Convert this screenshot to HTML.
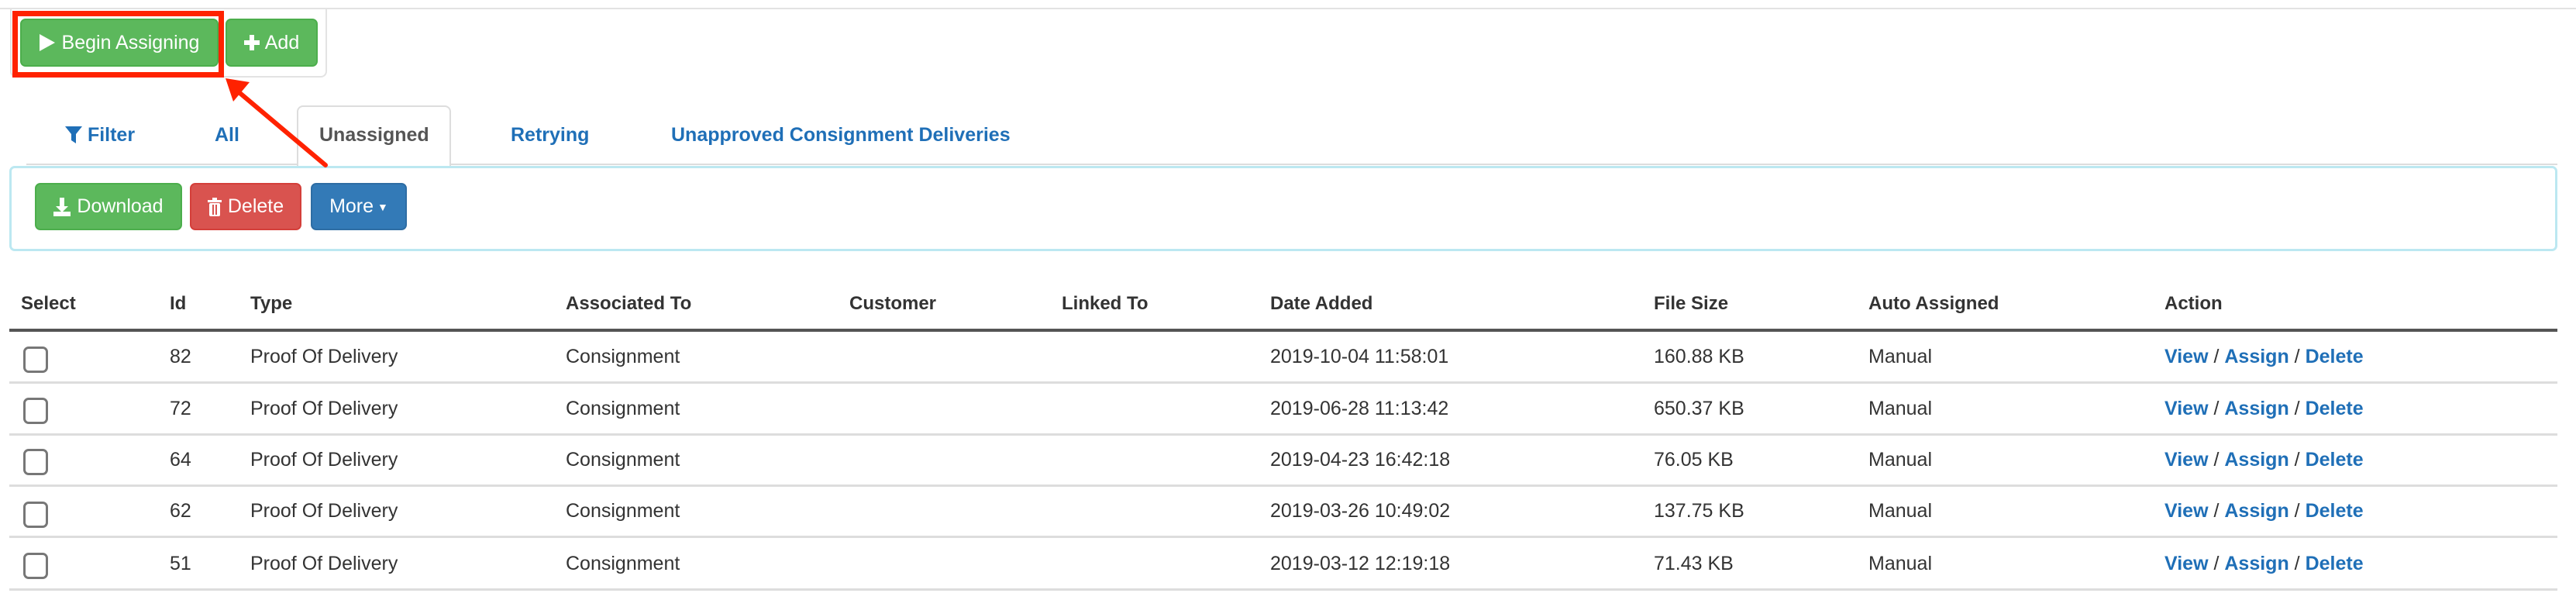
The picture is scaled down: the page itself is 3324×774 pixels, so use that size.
<!DOCTYPE html>
<html><head><meta charset="utf-8"><style>
*{box-sizing:border-box;margin:0;padding:0}
body{width:3324px;height:774px;background:#fff;font-family:"Liberation Sans",Arial,sans-serif;color:#333;position:relative;overflow:hidden}
.a{position:absolute;white-space:nowrap}
.btn{position:absolute;border-radius:7px;color:#fff;font-size:25px;display:flex;align-items:center;justify-content:center}
.g{background:#5cb85c;border:2px solid #4cae4c}
.r{background:#d9534f;border:2px solid #d43f3a}
.b{background:#337ab7;border:2px solid #2e6da4}
.tab{position:absolute;top:160px;font-size:25px;font-weight:bold;color:#1f6fb7}
.th{position:absolute;top:378px;font-size:24px;font-weight:bold;color:#333}
.td{position:absolute;font-size:25px;color:#333}
.lk{color:#1f6fb7;font-weight:bold}
.cb{position:absolute;left:30px;width:32px;height:34px;border:3px solid #777;border-radius:7px;background:#fff}
.hl{position:absolute;left:12px;width:3288px;height:3px;background:#ddd}
</style></head><body>
<div class="a" style="left:0;top:10px;width:3324px;height:2px;background:#e3e3e3"></div>
<div class="a" style="left:13px;top:10px;width:409px;height:90px;border:2px solid #e3e3e3;border-top:none;border-radius:0 0 8px 8px"></div>
<div class="btn g" style="left:26px;top:24px;width:256px;height:62px"><svg width="20" height="22" style="margin-right:9px"><polygon points="0,0 20,11 0,22" fill="#fff"/></svg>Begin Assigning</div>
<div class="btn g" style="left:291px;top:24px;width:119px;height:62px"><svg width="20" height="20" style="margin-right:7px"><rect x="7" y="0" width="6" height="20" fill="#fff"/><rect x="0" y="7" width="20" height="6" fill="#fff"/></svg>Add</div>
<div class="a" style="left:16px;top:14px;width:273px;height:86px;border:7px solid #ff2200"></div>

<div class="a" style="left:34px;top:211px;width:3266px;height:2px;background:#ddd"></div>
<div class="a" style="left:383px;top:136px;width:199px;height:78px;border:2px solid #ddd;border-bottom:none;border-radius:8px 8px 0 0;background:#fff"></div>
<div class="tab" style="left:84px"><svg width="22" height="22" style="vertical-align:-3px"><polygon points="0,0 22,0 14,10 14,22 8,18 8,10" fill="#1f6fb7"/></svg> Filter</div>
<div class="tab" style="left:277px">All</div>
<div class="tab" style="left:412px;color:#555">Unassigned</div>
<div class="tab" style="left:659px">Retrying</div>
<div class="tab" style="left:866px">Unapproved Consignment Deliveries</div>

<div class="a" style="left:12px;top:214px;width:3288px;height:110px;border:3px solid #bce8f1;border-radius:7px"></div>
<div class="btn g" style="left:45px;top:236px;width:190px;height:61px"><svg width="22" height="24" style="margin-right:8px"><rect x="8" y="0" width="6" height="12" fill="#fff"/><polygon points="3,11 19,11 11,19" fill="#fff"/><rect x="0" y="18" width="22" height="6" fill="#fff"/></svg>Download</div>
<div class="btn r" style="left:245px;top:236px;width:144px;height:61px"><svg width="18" height="24" style="margin-right:8px"><rect x="0" y="3" width="18" height="3" fill="#fff"/><rect x="6" y="0" width="6" height="3" fill="#fff"/><rect x="2" y="7" width="14" height="17" rx="2" fill="#fff"/><rect x="6" y="9" width="2" height="13" fill="#d9534f"/><rect x="10" y="9" width="2" height="13" fill="#d9534f"/></svg>Delete</div>
<div class="btn b" style="left:401px;top:236px;width:124px;height:61px">More <span style="font-size:14px;margin-left:5px">&#9660;</span></div>

<svg class="a" style="left:0;top:0" width="500" height="240"><line x1="420" y1="213" x2="300" y2="112" stroke="#ff2200" stroke-width="6" stroke-linecap="round"/><polygon points="291,101 301,131 322,106" fill="#ff2200"/></svg>

<div class="th" style="left:27px">Select</div>
<div class="th" style="left:219px">Id</div>
<div class="th" style="left:323px">Type</div>
<div class="th" style="left:730px">Associated To</div>
<div class="th" style="left:1096px">Customer</div>
<div class="th" style="left:1370px">Linked To</div>
<div class="th" style="left:1639px">Date Added</div>
<div class="th" style="left:2134px">File Size</div>
<div class="th" style="left:2411px">Auto Assigned</div>
<div class="th" style="left:2793px">Action</div>
<div class="a" style="left:12px;top:424px;width:3288px;height:4px;background:#555"></div>

<div class="cb" style="top:447px"></div><div class="td" style="left:219px;top:446px">82</div><div class="td" style="left:323px;top:446px">Proof Of Delivery</div><div class="td" style="left:730px;top:446px">Consignment</div><div class="td" style="left:1639px;top:446px">2019-10-04 11:58:01</div><div class="td" style="left:2134px;top:446px">160.88 KB</div><div class="td" style="left:2411px;top:446px">Manual</div><div class="td" style="left:2793px;top:446px"><span class="lk">View</span> / <span class="lk">Assign</span> / <span class="lk">Delete</span></div>
<div class="hl" style="top:492px"></div>
<div class="cb" style="top:513px"></div><div class="td" style="left:219px;top:513px">72</div><div class="td" style="left:323px;top:513px">Proof Of Delivery</div><div class="td" style="left:730px;top:513px">Consignment</div><div class="td" style="left:1639px;top:513px">2019-06-28 11:13:42</div><div class="td" style="left:2134px;top:513px">650.37 KB</div><div class="td" style="left:2411px;top:513px">Manual</div><div class="td" style="left:2793px;top:513px"><span class="lk">View</span> / <span class="lk">Assign</span> / <span class="lk">Delete</span></div>
<div class="hl" style="top:559px"></div>
<div class="cb" style="top:579px"></div><div class="td" style="left:219px;top:579px">64</div><div class="td" style="left:323px;top:579px">Proof Of Delivery</div><div class="td" style="left:730px;top:579px">Consignment</div><div class="td" style="left:1639px;top:579px">2019-04-23 16:42:18</div><div class="td" style="left:2134px;top:579px">76.05 KB</div><div class="td" style="left:2411px;top:579px">Manual</div><div class="td" style="left:2793px;top:579px"><span class="lk">View</span> / <span class="lk">Assign</span> / <span class="lk">Delete</span></div>
<div class="hl" style="top:625px"></div>
<div class="cb" style="top:647px"></div><div class="td" style="left:219px;top:645px">62</div><div class="td" style="left:323px;top:645px">Proof Of Delivery</div><div class="td" style="left:730px;top:645px">Consignment</div><div class="td" style="left:1639px;top:645px">2019-03-26 10:49:02</div><div class="td" style="left:2134px;top:645px">137.75 KB</div><div class="td" style="left:2411px;top:645px">Manual</div><div class="td" style="left:2793px;top:645px"><span class="lk">View</span> / <span class="lk">Assign</span> / <span class="lk">Delete</span></div>
<div class="hl" style="top:691px"></div>
<div class="cb" style="top:713px"></div><div class="td" style="left:219px;top:713px">51</div><div class="td" style="left:323px;top:713px">Proof Of Delivery</div><div class="td" style="left:730px;top:713px">Consignment</div><div class="td" style="left:1639px;top:713px">2019-03-12 12:19:18</div><div class="td" style="left:2134px;top:713px">71.43 KB</div><div class="td" style="left:2411px;top:713px">Manual</div><div class="td" style="left:2793px;top:713px"><span class="lk">View</span> / <span class="lk">Assign</span> / <span class="lk">Delete</span></div>
<div class="hl" style="top:759px"></div>
</body></html>
